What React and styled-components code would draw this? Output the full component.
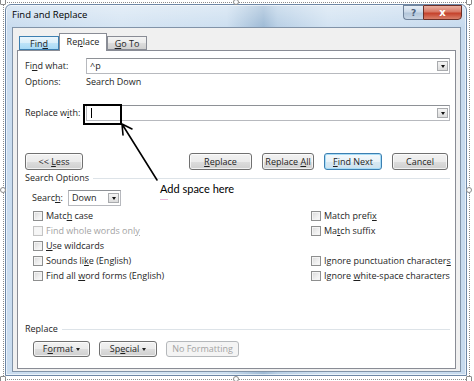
import React from 'react';
import styled, { createGlobalStyle, css } from 'styled-components';

const GlobalStyle = createGlobalStyle`
  html, body { margin: 0; padding: 0; background: #fff; }
  body { font-family: "Open Sans", "Noto Sans", sans-serif; color: #1e1e1e; }
  * { box-sizing: border-box; }
`;

const Stage = styled.div`
  position: relative;
  width: 474px;
  height: 381px;
  padding: 2px 4px 1px 3px;
  background: #fff;
`;

const Selection = styled.div`
  height: 100%;
  border: 1px dotted #8c8c8c;
  padding: 1px 2px 3px 1px;
`;

const Handle = styled.span`
  position: absolute;
  width: 6px;
  height: 6px;
  background: #fff;
  border: 1px solid #8a8a8a;
  border-radius: ${p => (p.$round ? '50%' : '1px')};
  left: ${p => p.$x - 3}px;
  top: ${p => p.$y - 3}px;
`;

const Window = styled.div`
  height: 100%;
  display: flex;
  flex-direction: column;
  border: 1px solid #6d87a6;
  border-radius: 6px 6px 0 0;
  padding: 0 5px 3px 6px;
  background:
    linear-gradient(180deg, rgba(255,255,255,0.35), rgba(255,255,255,0) 22px),
    linear-gradient(90deg, #c9dcef 0%, #d6e5f3 25%, #cddff0 48%, #9fbbd6 56%, #b9d0e6 59%, #d3e3f2 70%, #c6daee 100%);
  box-shadow: inset 0 0 0 1px rgba(255,255,255,0.6);
`;

const TitleBar = styled.div`
  height: 22px;
  flex-shrink: 0;
  display: flex;
  align-items: flex-start;
`;

const Title = styled.div`
  flex: 1;
  padding-top: 3px;
  font-size: 9.5px;
  line-height: 13px;
  color: #000;
`;

const CaptionButton = styled.div`
  height: 15px;
  display: flex;
  align-items: center;
  justify-content: center;
  font-family: "DejaVu Sans", sans-serif;
  ${p => p.$close ? css`
    width: 39px;
    margin-right: -1px;
    border: 1px solid #6b2e26;
    border-radius: 0 0 4px 0;
    background: linear-gradient(180deg, #eab0a2 0%, #d77864 45%, #c5412b 55%, #d9806a 100%);
    color: #fff;
    font-size: 10px;
    font-weight: bold;
  ` : css`
    width: 20px;
    border: 1px solid #6f829a;
    border-right: none;
    border-radius: 0 0 0 4px;
    background: linear-gradient(180deg, #e6eef7 0%, #cbd9e8 45%, #b3c6da 55%, #c8d7e7 100%);
    color: #4e627c;
    font-size: 9px;
    font-weight: bold;
  `}
`;

const Client = styled.div`
  flex: 1;
  display: flex;
  flex-direction: column;
  background: #f0f0f0;
  border: 1px solid #8193a8;
  padding: 5px 4px 2px 4px;
`;

const TabStrip = styled.div`
  position: relative;
  z-index: 1;
  height: 18px;
  margin: 0 0 -1px 2px;
  display: flex;
  align-items: flex-end;
`;

const Tab = styled.div`
  display: flex;
  align-items: center;
  justify-content: center;
  font-size: 9px;
  border: 1px solid #898c95;
  ${p => p.$active ? css`
    width: 48px;
    height: 18px;
    background: #fff;
    border-bottom: none;
    padding-bottom: 2px;
  ` : css`
    width: 40px;
    height: 14px;
    margin-bottom: 1px;
    background: ${p.$hover
      ? 'linear-gradient(180deg, #eaf5fc 0%, #d9eefa 50%, #bee3f8 51%, #a7d9f5 100%)'
      : 'linear-gradient(180deg, #f3f3f3 0%, #ebebeb 50%, #dddddd 51%, #cfcfcf 100%)'};
    border-color: ${p.$hover ? '#3c7fb1' : '#898c95'};
  `}
`;

const Panel = styled.div`
  flex: 1;
  display: flex;
  flex-direction: column;
  background: #fff;
  border: 1px solid #898c95;
  padding: 0 7px 11px 7px;
  font-size: 9px;
  line-height: 12px;
`;

const FieldRow = styled.div`
  display: flex;
  align-items: center;
  height: 16px;
  margin-top: ${p => p.$mt}px;
`;

const Label = styled.span`
  width: ${p => p.$w}px;
  flex-shrink: 0;
`;

const Combo = styled.div`
  flex: 1;
  height: 16px;
  margin-right: -2px;
  display: flex;
  align-items: center;
  padding: 0 1px 0 3px;
  border: 1px solid #b7b9be;
  border-top-color: #8e9196;
  background: #fff;
`;

const Select = styled(Combo)`
  flex: none;
  width: 53px;
  margin-right: 0;
`;

const DropButton = styled.span`
  margin-left: auto;
  width: 11px;
  height: 10px;
  display: flex;
  align-items: center;
  justify-content: center;
  border: 1px solid #a9abae;
  background: linear-gradient(180deg, #f5f5f5, #dcdcdc);
  &::after {
    content: '';
    border-left: 2.5px solid transparent;
    border-right: 2.5px solid transparent;
    border-top: 3px solid #111;
  }
`;

const Caret = styled.span`
  width: 1px;
  height: 10px;
  margin-left: 1px;
  background: #000;
`;

const InfoRow = styled.div`
  display: flex;
  height: 12px;
  margin-top: 2px;
`;

const ButtonRow = styled.div`
  display: flex;
  align-items: center;
  gap: ${p => p.$gap || 0}px;
  margin-top: ${p => p.$mt || 0}px;
  padding-left: ${p => p.$indent || 0}px;
`;

const Push = styled.div`
  margin-left: auto;
  display: flex;
  gap: 10px;
`;

const Button = styled.div`
  width: ${p => p.$w}px;
  height: ${p => p.$h || 17}px;
  display: flex;
  align-items: center;
  justify-content: center;
  gap: 3px;
  white-space: nowrap;
  border-radius: 3px;
  border: 1px solid #707070;
  background: linear-gradient(180deg, #f2f2f2 0%, #ebebeb 50%, #dddddd 51%, #cfcfcf 100%);
  box-shadow: inset 0 0 0 1px rgba(255,255,255,0.7);
  ${p => p.$primary && css`
    border-color: #3c7fb1;
    box-shadow: inset 0 0 0 1px #a6dcf7;
    background: linear-gradient(180deg, #f4f9fc 0%, #e8f2f8 50%, #d7e8f2 51%, #cde2ef 100%);
  `}
  ${p => p.$disabled && css`
    border-color: #b5b8bb;
    background: #f4f4f4;
    box-shadow: none;
    color: #a3a3a3;
  `}
`;

const Caret3 = styled.span`
  border-left: 2.5px solid transparent;
  border-right: 2.5px solid transparent;
  border-top: 3px solid #222;
  margin-top: 1px;
`;

const SectionHeader = styled.div`
  display: flex;
  align-items: center;
  gap: 4px;
  height: 12px;
  margin-top: ${p => p.$mt}px;
  &::after {
    content: '';
    flex: 1;
    height: 1px;
    margin-right: -2px;
    background: #dde3e8;
  }
`;

const CheckGrid = styled.div`
  display: grid;
  grid-template-columns: 278px 1fr;
  grid-auto-rows: 15px;
  margin-top: 2px;
  padding-left: 8px;
`;

const Check = styled.div`
  display: flex;
  align-items: center;
  gap: 3px;
  white-space: nowrap;
  color: ${p => (p.$disabled ? '#a3a3a3' : 'inherit')};
`;

const Box = styled.span`
  width: 10px;
  height: 10px;
  flex-shrink: 0;
  border: 1px solid ${p => (p.$disabled ? '#c4c4c4' : '#8e8f8f')};
  background: ${p => (p.$disabled
    ? '#f6f6f6'
    : 'linear-gradient(135deg, #d8d8d8 0%, #f0f0f0 60%, #fbfbfb 100%)')};
  box-shadow: inset 0 0 0 1px #f4f4f4;
`;

const Key = styled.span`
  text-decoration: underline;
  text-underline-offset: 1px;
`;

const ReplaceSection = styled.div`
  margin-top: auto;
`;

const HighlightBox = styled.div`
  position: absolute;
  left: 83px;
  top: 104px;
  width: 39px;
  height: 21px;
  border: 2px solid #000;
`;

const ArrowSvg = styled.svg`
  position: absolute;
  left: 115px;
  top: 118px;
`;

const Note = styled.div`
  position: absolute;
  left: 160px;
  top: 182px;
  font-family: Lato, "Open Sans", sans-serif;
  font-size: 11px;
  line-height: 14px;
  color: #000;
`;

const InkMark = styled.div`
  position: absolute;
  left: 160px;
  top: 199px;
  width: 8px;
  height: 1px;
  background: #eeb8dc;
`;

const handles = [
  [3, 2], [236, 2, true], [469, 2],
  [3, 190, true], [469, 190, true],
  [3, 379], [236, 379, true], [469, 379],
];

const leftOptions = [
  { label: <>Matc<Key>h</Key> case</> },
  { label: <>Find whole words onl<Key>y</Key></>, disabled: true },
  { label: <><Key>U</Key>se wildcards</> },
  { label: <>Sounds li<Key>k</Key>e (English)</> },
  { label: <>Find all <Key>w</Key>ord forms (English)</> },
];

const rightOptions = [
  { label: <>Match prefi<Key>x</Key></> },
  { label: <>Ma<Key>t</Key>ch suffix</> },
  null,
  { label: <>Ignore punctuation character<Key>s</Key></> },
  { label: <>Ignore <Key>w</Key>hite-space characters</> },
];

const CheckItem = ({ item }) =>
  item ? (
    <Check $disabled={item.disabled}>
      <Box $disabled={item.disabled} />
      <span>{item.label}</span>
    </Check>
  ) : (
    <span />
  );

export default function App() {
  return (
    <>
      <GlobalStyle />
      <Stage>
        <Selection>
          <Window>
            <TitleBar>
              <Title>Find and Replace</Title>
              <CaptionButton>?</CaptionButton>
              <CaptionButton $close>x</CaptionButton>
            </TitleBar>
            <Client>
              <TabStrip>
                <Tab $hover><span>Fin<Key>d</Key></span></Tab>
                <Tab $active><span>Re<Key>p</Key>lace</span></Tab>
                <Tab><span><Key>G</Key>o To</span></Tab>
              </TabStrip>
              <Panel>
                <FieldRow $mt={7}>
                  <Label $w={61}>Fi<Key>n</Key>d what:</Label>
                  <Combo>
                    <span>^p</span>
                    <DropButton />
                  </Combo>
                </FieldRow>
                <InfoRow>
                  <Label $w={61}>Options:</Label>
                  <span>Search Down</span>
                </InfoRow>
                <FieldRow $mt={17}>
                  <Label $w={61}>Replace w<Key>i</Key>th:</Label>
                  <Combo>
                    <Caret />
                    <DropButton />
                  </Combo>
                </FieldRow>
                <ButtonRow $mt={32}>
                  <Button $w={58}><span>&lt;&lt; <Key>L</Key>ess</span></Button>
                  <Push>
                    <Button $w={63}><span><Key>R</Key>eplace</span></Button>
                    <Button $w={52}><span>Replace <Key>A</Key>ll</span></Button>
                    <Button $w={58} $primary><span><Key>F</Key>ind Next</span></Button>
                    <Button $w={56}><span>Cancel</span></Button>
                  </Push>
                </ButtonRow>
                <SectionHeader $mt={2}>Search Options</SectionHeader>
                <ButtonRow $mt={6} $indent={7}>
                  <Label $w={36}>Searc<Key>h</Key>:</Label>
                  <Select>
                    <span>Down</span>
                    <DropButton />
                  </Select>
                </ButtonRow>
                <CheckGrid>
                  {leftOptions.map((item, i) => (
                    <React.Fragment key={i}>
                      <CheckItem item={item} />
                      <CheckItem item={rightOptions[i]} />
                    </React.Fragment>
                  ))}
                </CheckGrid>
                <ReplaceSection>
                  <SectionHeader $mt={0}>Replace</SectionHeader>
                  <ButtonRow $mt={6} $indent={8} $gap={9}>
                    <Button $w={57} $h={16}><span>F<Key>o</Key>rmat</span><Caret3 /></Button>
                    <Button $w={58} $h={16}><span>Sp<Key>e</Key>cial</span><Caret3 /></Button>
                    <Button $w={73} $h={16} $disabled><span>No Formatting</span></Button>
                  </ButtonRow>
                </ReplaceSection>
              </Panel>
            </Client>
          </Window>
        </Selection>
        {handles.map(([x, y, round], i) => (
          <Handle key={i} $x={x} $y={y} $round={round} />
        ))}
        <HighlightBox />
        <ArrowSvg width="50" height="68" viewBox="0 0 50 68">
          <path d="M7 6 L42 62 M7 6 L17 11 M7 6 L8 17" stroke="#000" strokeWidth="1.6" fill="none" strokeLinecap="round" />
        </ArrowSvg>
        <Note>Add space here</Note>
        <InkMark />
      </Stage>
    </>
  );
}
